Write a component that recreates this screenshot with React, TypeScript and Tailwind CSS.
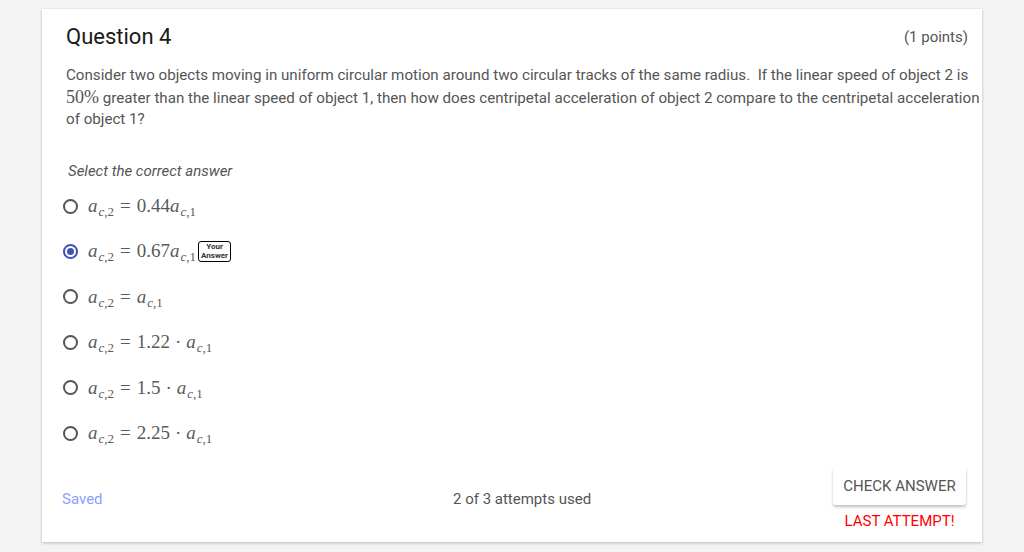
const M = ({ children }: { children: React.ReactNode }) => (
  <span style={{ fontFamily: '"Liberation Serif", "DejaVu Serif", serif' }}>{children}</span>
);

const Acc = ({ n }: { n: string }) => (
  <span className="inline-flex items-baseline">
    <span className="italic">a</span>
    <span className="relative top-[4px] text-[13px] leading-none ml-[1px]">
      <span className="italic">c</span>,{n}
    </span>
  </span>
);

const Radio = ({ checked }: { checked?: boolean }) =>
  checked ? (
    <span className="flex h-[15px] w-[15px] items-center justify-center rounded-full border-2 border-[#3f51b5]">
      <span className="h-[7px] w-[7px] rounded-full bg-[#3f51b5]" />
    </span>
  ) : (
    <span className="block h-[15px] w-[15px] rounded-full border-2 border-[#555]" />
  );

const options: { coef: string; dot?: boolean; checked?: boolean }[] = [
  { coef: "0.44" },
  { coef: "0.67", checked: true },
  { coef: "" },
  { coef: "1.22", dot: true },
  { coef: "1.5", dot: true },
  { coef: "2.25", dot: true },
];

export default function App() {
  return (
    <div
      className="min-h-screen bg-[#f3f3f3] pt-[9px] pl-[42px]"
      style={{ fontFamily: 'Roboto, "Liberation Sans", sans-serif' }}
    >
      <div className="flex h-[533px] w-[940px] flex-col bg-white shadow-[0_1px_3px_rgba(0,0,0,0.25)]">
        <div className="flex items-center justify-between pl-[24px] pr-[14px] pt-[13px]">
          <h1 className="text-[22px] leading-[30px] text-[#1a1a1a]">Question 4</h1>
          <span className="text-[15px] text-[#555]">(1 points)</span>
        </div>

        <p className="mt-[13px] whitespace-nowrap pl-[24px] text-[15.15px] leading-[21.5px] text-[#555]">
          Consider two objects moving in uniform circular motion around two circular tracks of the same radius.&nbsp; If the linear speed of object 2 is
          <br />
          <M><span className="text-[18px]">50%</span></M> greater than the linear speed of object 1, then how does centripetal acceleration of object 2 compare to the centripetal acceleration
          <br />
          of object 1?
        </p>

        <p className="mt-[30px] pl-[26px] text-[15px] italic leading-[20px] text-[#555]">Select the correct answer</p>

        <div className="mt-[3px] flex flex-col pl-[21px]">
          {options.map((o, i) => (
            <div key={i} className="flex h-[45.4px] items-center gap-[10px]">
              <Radio checked={o.checked} />
              <span className="flex items-center text-[19px] text-[#5a5a5a]">
                <M>
                  <Acc n="2" />
                  <span className="mx-[6px]">=</span>
                  {o.coef}
                  {o.dot && <span className="mx-[5px]">·</span>}
                  <Acc n="1" />
                </M>
                {o.checked && (
                  <span className="ml-[2px] flex h-[21px] w-[33px] flex-col items-center justify-center rounded-[3px] border border-black text-[8px] font-bold leading-[8.5px] text-[#333]">
                    <span>Your</span>
                    <span>Answer</span>
                  </span>
                )}
              </span>
            </div>
          ))}
        </div>

        <div className="mt-[11px] flex items-start pl-[20px] pr-[16px]">
          <span className="mt-[21px] w-[391px] text-[15px] text-[#8c9eff]">Saved</span>
          <span className="mt-[21px] text-[15px] text-[#555]">2 of 3 attempts used</span>
          <div className="ml-auto flex flex-col items-center">
            <button className="h-[38px] w-[133px] rounded-[3px] bg-white text-[15px] text-[#555] shadow-[0_2px_3px_rgba(0,0,0,0.25)]">
              CHECK ANSWER
            </button>
            <span className="mt-[5px] text-[15px] text-[#ff0000]">LAST ATTEMPT!</span>
          </div>
        </div>
      </div>
    </div>
  );
}
